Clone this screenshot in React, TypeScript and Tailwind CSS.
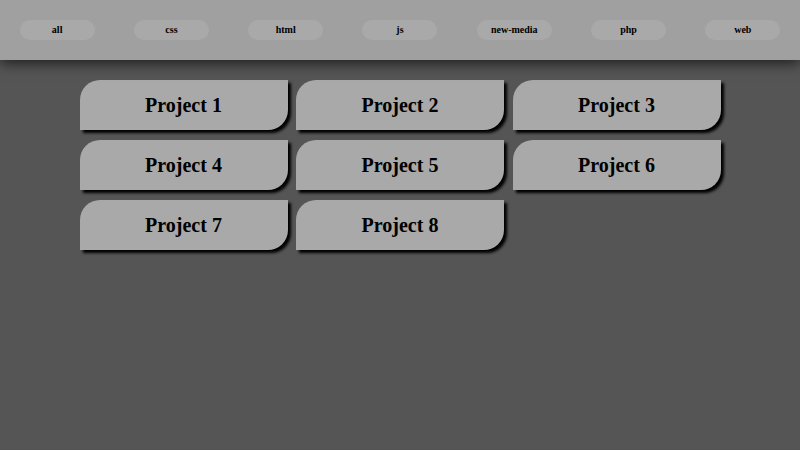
const TAGS = ["all", "css", "html", "js", "new-media", "php", "web"];
const PROJECTS = Array.from({ length: 8 }, (_, i) => `Project ${i + 1}`);

export default function App() {
  return (
    <div className="min-h-[450px] bg-[#555555] font-['Liberation_Serif',serif]">
      {/* Filter bar */}
      <nav className="relative z-10 h-[60px] bg-[#a0a0a0] shadow-[0_4px_12px_rgba(0,0,0,0.6)] flex items-center justify-around">
        {TAGS.map(tag => (
          <button
            key={tag}
            className="w-[75px] h-[20px] rounded-full bg-[#a9a9a9] text-[10px] leading-none font-bold text-black flex items-center justify-center"
          >
            {tag}
          </button>
        ))}
      </nav>

      {/* Projects */}
      <div className="w-[641px] mx-auto pt-[20px] grid grid-cols-3 gap-x-[8.5px] gap-y-[10px]">
        {PROJECTS.map(name => (
          <div
            key={name}
            className="h-[50px] bg-[#a9a9a9] rounded-tl-[20px] rounded-br-[20px] shadow-[3px_3px_3px_#000] flex items-center justify-center text-[20px] font-bold text-black"
          >
            {name}
          </div>
        ))}
      </div>
    </div>
  );
}
